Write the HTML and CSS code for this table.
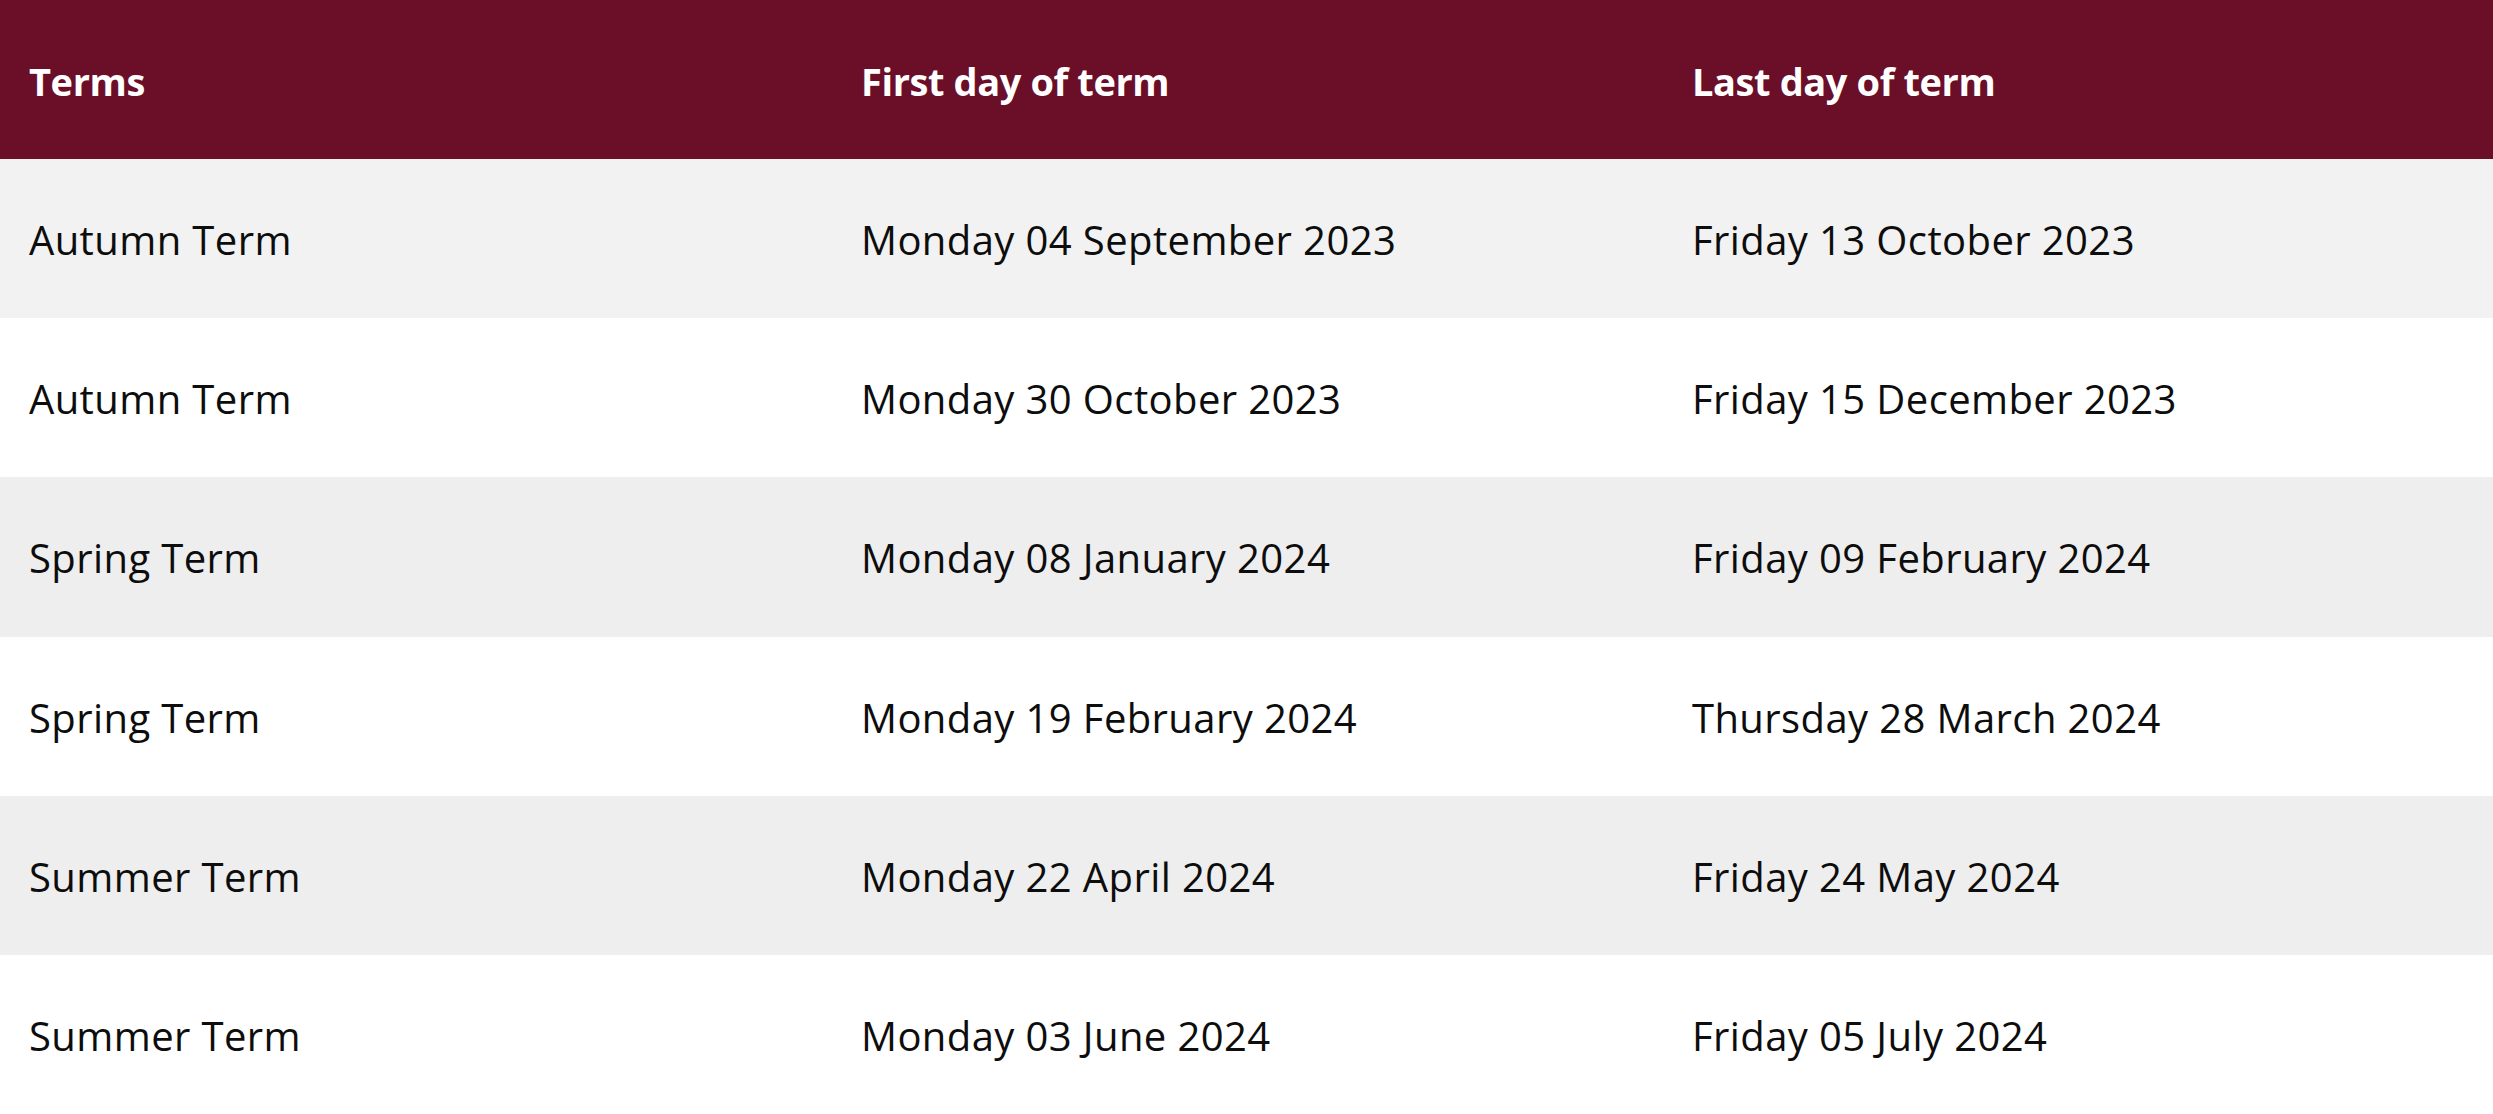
FILE: index.html
```html
<!DOCTYPE html>
<html lang="en">
<head>
<meta charset="utf-8">
<title>Term dates</title>
<link rel="stylesheet" href="styles.css">
</head>
<body>
<div class="terms">
  <div class="row head">
    <div class="cell">Terms</div>
    <div class="cell">First day of term</div>
    <div class="cell">Last day of term</div>
  </div>
  <div class="row shade-a">
    <div class="cell">Autumn Term</div>
    <div class="cell">Monday 04 September 2023</div>
    <div class="cell">Friday 13 October 2023</div>
  </div>
  <div class="row">
    <div class="cell">Autumn Term</div>
    <div class="cell">Monday 30 October 2023</div>
    <div class="cell">Friday 15 December 2023</div>
  </div>
  <div class="row shade-b">
    <div class="cell">Spring Term</div>
    <div class="cell">Monday 08 January 2024</div>
    <div class="cell">Friday 09 February 2024</div>
  </div>
  <div class="row">
    <div class="cell">Spring Term</div>
    <div class="cell">Monday 19 February 2024</div>
    <div class="cell">Thursday 28 March 2024</div>
  </div>
  <div class="row shade-b">
    <div class="cell">Summer Term</div>
    <div class="cell">Monday 22 April 2024</div>
    <div class="cell">Friday 24 May 2024</div>
  </div>
  <div class="row">
    <div class="cell">Summer Term</div>
    <div class="cell">Monday 03 June 2024</div>
    <div class="cell">Friday 05 July 2024</div>
  </div>
</div>
</body>
</html>
```
FILE: styles.css
```css
html, body {
  margin: 0;
  padding: 0;
  background: #ffffff;
}

body {
  font-family: "Open Sans", "Liberation Sans", sans-serif;
  color: #0d0d0d;
}

.terms {
  height: 100vh;
  display: grid;
  grid-template-rows: repeat(7, 1fr);
}

.row {
  display: grid;
  grid-template-columns: 1fr 1fr 1fr;
  align-items: center;
  background: #ffffff;
}

.row.head {
  background: #6b0e28;
  color: #ffffff;
  font-weight: 700;
}

.row.shade-a {
  background: #f2f2f2;
}

.row.shade-b {
  background: #eeeeee;
}

.cell {
  padding: 3px 30px 0;
  font-size: 40px;
  line-height: 1;
  letter-spacing: 0.4px;
  white-space: nowrap;
}

.cell:first-child {
  padding-left: 29px;
}

.row.head .cell {
  font-size: 38px;
  letter-spacing: -0.4px;
}
```
